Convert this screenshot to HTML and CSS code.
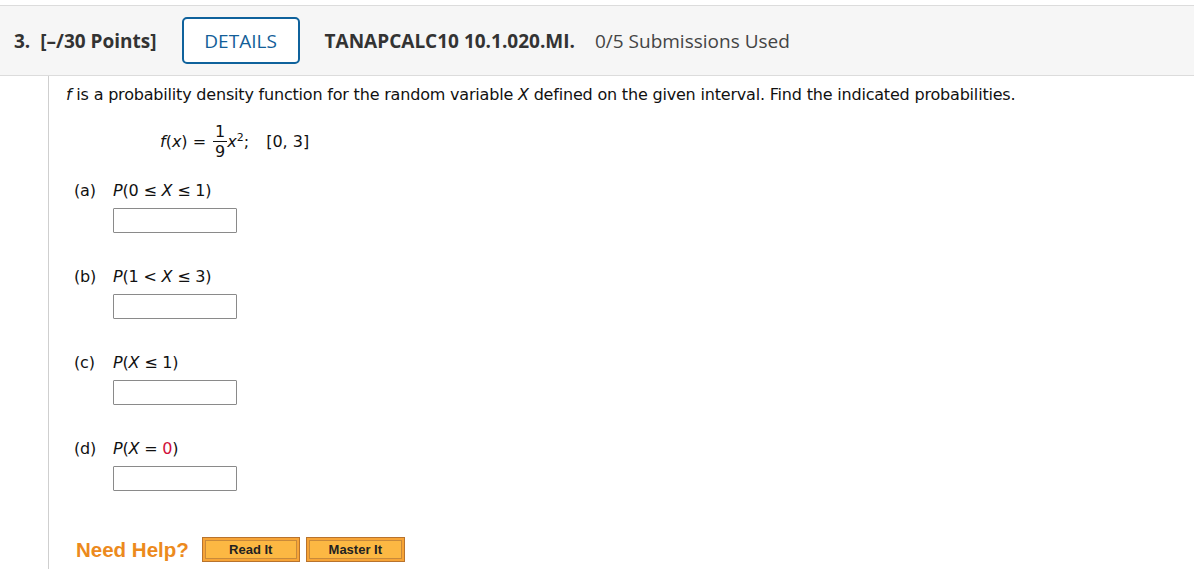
FILE: index.html
```html
<!DOCTYPE html>
<html>
<head>
<meta charset="utf-8">
<link rel="stylesheet" href="styles.css">
</head>
<body>
<div class="header">
  <span class="num">3.</span>
  <span class="points">[–/30 Points]</span>
  <span class="details">DETAILS</span>
  <span class="code">TANAPCALC10 10.1.020.MI.</span>
  <span class="subs">0/5 Submissions Used</span>
</div>
<div class="content">
  <p class="question"><i>f</i> is a probability density function for the random variable <i>X</i> defined on the given interval. Find the indicated probabilities.</p>
  <div class="formula">
    <span><i>f</i>(<i>x</i>) =</span>
    <span class="frac"><span class="numer">1</span><span class="denom">9</span></span>
    <span><i>x</i><sup>2</sup>;</span>
    <span class="interval">[0, 3]</span>
  </div>
  <div class="part first">
    <div class="plabel"><span class="letter">(a)</span><span><i>P</i>(0 ≤ <i>X</i> ≤ 1)</span></div>
    <div class="answer"></div>
  </div>
  <div class="part">
    <div class="plabel"><span class="letter">(b)</span><span><i>P</i>(1 &lt; <i>X</i> ≤ 3)</span></div>
    <div class="answer"></div>
  </div>
  <div class="part">
    <div class="plabel"><span class="letter">(c)</span><span><i>P</i>(<i>X</i> ≤ 1)</span></div>
    <div class="answer"></div>
  </div>
  <div class="part">
    <div class="plabel"><span class="letter">(d)</span><span><i>P</i>(<i>X</i> = <span class="red">0</span>)</span></div>
    <div class="answer"></div>
  </div>
  <div class="help">
    <span class="need">Need Help?</span>
    <span class="hbtn read">Read It</span>
    <span class="hbtn master">Master It</span>
  </div>
</div>
</body>
</html>
```
FILE: styles.css
```css
html, body {
  margin: 0;
  padding: 0;
  background: #fff;
  height: 100%;
  overflow: hidden;
}
body {
  font-family: "DejaVu Sans", Verdana, sans-serif;
  color: #111;
}
.header {
  margin-top: 5px;
  height: 69px;
  background: #f6f6f6;
  border-top: 1px solid #dcdcdc;
  border-bottom: 1px solid #dcdcdc;
  display: flex;
  align-items: center;
  padding-left: 14px;
  font-family: "Open Sans", sans-serif;
  font-size: 19px;
  color: #333;
}
.num { font-weight: 700; margin-right: 10px; }
.points { font-weight: 700; margin-right: 25px; }
.details {
  box-sizing: border-box;
  width: 118px;
  height: 47px;
  border: 2px solid #0f629c;
  border-radius: 5px;
  background: #fff;
  color: #135e98;
  display: flex;
  align-items: center;
  justify-content: center;
  margin-right: 25px;
}
.code { font-weight: 700; margin-right: 20px; }
.subs { color: #444; }
.content {
  margin-left: 48px;
  border-left: 1px solid #cfcfcf;
  padding-left: 17px;
  height: 500px;
  font-size: 16px;
  letter-spacing: -0.19px;
}
.question {
  margin: 0;
  padding-top: 9px;
  line-height: 19px;
}
.formula {
  margin-left: 94px;
  margin-top: 17px;
  display: flex;
  align-items: center;
  height: 40px;
  letter-spacing: 0;
}
.frac {
  display: inline-flex;
  flex-direction: column;
  align-items: stretch;
  text-align: center;
  margin: 0 0 0 7px;
}
.numer {
  border-bottom: 1px solid #111;
  padding: 0 2px 1px;
  line-height: 17px;
}
.denom { padding: 1px 2px 0; line-height: 17px; }
sup { font-size: 11px; vertical-align: 6px; line-height: 0; }
.interval { margin-left: 17px; }
.part {
  margin-left: 8px;
  margin-top: 34px;
}
.part.first { margin-top: 20px; }
.plabel {
  display: flex;
  line-height: 19px;
}
.letter { width: 39px; }
.answer {
  margin-left: 39px;
  margin-top: 8px;
  box-sizing: border-box;
  width: 124px;
  height: 25px;
  border: 1px solid #8a8a8a;
  border-radius: 1px;
}
.red { color: #d0103a; }
.help {
  margin-left: 10px;
  margin-top: 46px;
  display: flex;
  align-items: center;
  font-family: "Liberation Sans", Arial, sans-serif;
  letter-spacing: 0;
}
.need {
  color: #ec8a1d;
  font-size: 20.5px;
  font-weight: 700;
  margin-right: 13px;
}
.hbtn {
  box-sizing: border-box;
  height: 25px;
  border: 1px solid #b8732d;
  background: #fcb843;
  box-shadow: inset 0 0 0 2px #f7a436, inset 0 0 0 3px #c98a3a;
  display: flex;
  align-items: center;
  justify-content: center;
  font-size: 13px;
  font-weight: 700;
  color: #222;
}
.read { width: 98px; margin-right: 6px; }
.master { width: 99px; }
```
